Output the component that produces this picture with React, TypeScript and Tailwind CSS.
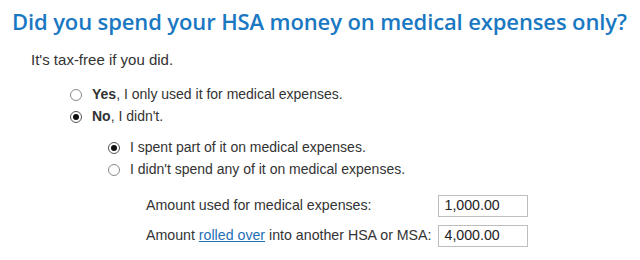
import React from "react";

function Radio({ checked }: { checked?: boolean }) {
  return (
    <span
      className={
        "inline-flex h-[12px] w-[12px] shrink-0 items-center justify-center rounded-full border bg-white " +
        (checked ? "border-[#555]" : "border-[#8a8a8a]")
      }
    >
      {checked && <span className="h-[6px] w-[6px] rounded-full bg-[#111]" />}
    </span>
  );
}

export default function App() {
  return (
    <div className="h-[260px] w-[640px] overflow-hidden bg-white" style={{ fontFamily: '"Liberation Sans", Arial, sans-serif' }}>
      <h1
        className="whitespace-nowrap pl-[12px] pt-[6px] text-[22px] font-semibold leading-[30px] tracking-[-0.12px] text-[#1a78c2]"
        style={{ fontFamily: '"Open Sans", sans-serif' }}
      >
        Did you spend your HSA money on medical expenses only?
      </h1>
      <p className="ml-[31px] mt-[15px] text-[15px] leading-[18px] text-[#333]">It&apos;s tax-free if you did.</p>
      <div className="ml-[70px] mt-[17px] flex flex-col gap-[5px] text-[14px] leading-[17px] text-[#333]">
        <label className="flex items-center gap-[10px]">
          <Radio />
          <span>
            <b className="font-bold">Yes</b>, I only used it for medical expenses.
          </span>
        </label>
        <label className="flex items-center gap-[10px]">
          <Radio checked />
          <span>
            <b className="font-bold">No</b>, I didn&apos;t.
          </span>
        </label>
      </div>
      <div className="ml-[108px] mt-[14px] flex flex-col gap-[5px] text-[14px] leading-[17px] text-[#333]">
        <label className="flex items-center gap-[10px]">
          <Radio checked />
          <span>I spent part of it on medical expenses.</span>
        </label>
        <label className="flex items-center gap-[10px]">
          <Radio />
          <span>I didn&apos;t spend any of it on medical expenses.</span>
        </label>
      </div>
      <div className="ml-[146px] mt-[17px] grid w-fit grid-cols-[auto_auto] items-center gap-x-[6px] gap-y-[8px] text-[14.2px] text-[#333]">
        <span>Amount used for medical expenses:</span>
        <div className="flex h-[22px] w-[90px] items-center border border-[#bdbdbd] px-[6px] text-[#222]">1,000.00</div>
        <span>
          Amount <span className="text-[#1f6fb5] underline">rolled over</span> into another HSA or MSA:
        </span>
        <div className="flex h-[22px] w-[90px] items-center border border-[#bdbdbd] px-[6px] text-[#222]">4,000.00</div>
      </div>
    </div>
  );
}
